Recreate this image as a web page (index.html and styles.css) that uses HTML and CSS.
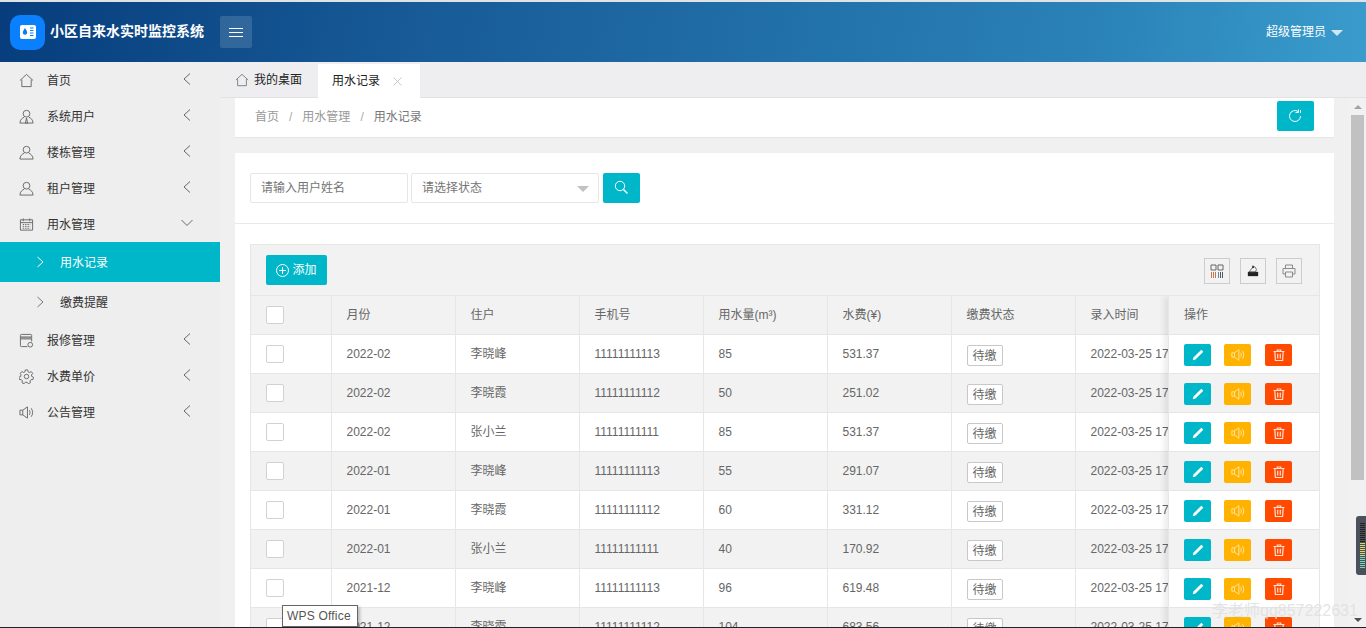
FILE: index.html
```html
<!DOCTYPE html>
<html lang="zh-CN">
<head>
<meta charset="utf-8">
<title>小区自来水实时监控系统</title>
<link rel="stylesheet" href="styles.css">
</head>
<body>
<svg class="defs" width="0" height="0" aria-hidden="true">
  <symbol id="i-home" viewBox="0 0 16 16"><path d="M1 8 8 1.500 15 8M3 7v7.500h10V7" fill="none" stroke="currentColor"/></symbol>
  <symbol id="i-user" viewBox="0 0 16 16"><circle cx="8" cy="5" r="3.600" fill="none" stroke="currentColor"/><path d="M1 15c0-3.500 2.500-5.500 4.500-6.200M15 15c0-3.500-2.500-5.500-4.500-6.200M1 15h14" fill="none" stroke="currentColor"/></symbol>
  <symbol id="i-tie" viewBox="0 0 16 16"><circle cx="8" cy="5" r="3.600" fill="none" stroke="currentColor"/><path d="M1 15c0-3.500 2.500-5.500 4.500-6.200M15 15c0-3.500-2.500-5.500-4.500-6.200M1 15h14M8 9.500 6.800 15h2.400z" fill="none" stroke="currentColor"/></symbol>
  <symbol id="i-cal" viewBox="0 0 16 16"><path d="M1.500 3h13v11h-13zM1.500 6h13M4.500 1.500v3M11.500 1.500v3" fill="none" stroke="currentColor"/><path d="M4 8h8M4 10h8M4 12h8" stroke="currentColor" stroke-dasharray="1.500 1"/></symbol>
  <symbol id="i-form" viewBox="0 0 16 16"><path d="M9 14.500H2.500a1 1 0 0 1-1-1v-11a1 1 0 0 1 1-1h10a1 1 0 0 1 1 1V9" fill="none" stroke="currentColor"/><path d="M2 3.500h11v3.500H2z" fill="currentColor" opacity=".7"/><circle cx="12" cy="12.500" r="2.500" fill="none" stroke="currentColor"/></symbol>
  <symbol id="i-gear" viewBox="0 0 16 16"><path d="M6.700 1h2.600l.4 2 1.500.7 1.800-1 1.600 2-1.300 1.600.3 1.700 1.900.8-.6 2.500-2 0-1.100 1.300.4 2-2.300 1.100-1.300-1.600h-1.800l-1.300 1.600-2.300-1.100.4-2-1.100-1.300-2 0-.6-2.500 1.900-.8.300-1.700L1.400 4.700l1.600-2 1.800 1 1.500-.7z" fill="none" stroke="currentColor"/><circle cx="8" cy="8" r="2.400" fill="none" stroke="currentColor"/></symbol>
  <symbol id="i-sound" viewBox="0 0 16 16"><path d="M1 5.500h3L9 2v12l-5-3.500H1zM4 5.500v5M11 5.500c1 1.500 1 3.500 0 5M13 3.500c2 2.500 2 6.500 0 9" fill="none" stroke="currentColor"/></symbol>
  <symbol id="i-left" viewBox="0 0 10 12"><path d="M8 .5 2 6l6 5.500" fill="none" stroke="currentColor"/></symbol>
  <symbol id="i-down" viewBox="0 0 12 10"><path d="M.5 2 6 7.500 11.500 2" fill="none" stroke="currentColor"/></symbol>
  <symbol id="i-right" viewBox="0 0 10 12"><path d="M2.500 1 8 6l-5.500 5" fill="none" stroke="currentColor"/></symbol>
  <symbol id="i-pen" viewBox="0 0 12 12"><path d="M9.300 .7 11.300 2.700 3.500 10.500 .7 11.300 1.500 8.500z" fill="currentColor"/></symbol>
  <symbol id="i-trash" viewBox="0 0 12 12"><path d="M.5 2.500h11M4.300 2.500V1h3.400v1.500M1.800 2.500l.6 9h7.200l.6-9M4.700 4.800v4.700M7.300 4.800v4.700" fill="none" stroke="currentColor" stroke-width="1.200"/></symbol>
</svg>

<div class="strip"></div>
<header class="topbar">
  <div class="brand">
    <span class="logo"><svg width="16" height="14" viewBox="0 0 16 14"><rect width="16" height="14" rx="2" fill="#fff"/><path d="M5 3c1.500 2.200 2.200 3.300 2.200 4.600a2.200 2.200 0 0 1-4.400 0C2.800 6.300 3.500 5.200 5 3z" fill="#0a7cf0"/><path d="M10 3h3.500M10 5.500h3.500M10 8h3.500M10 10.500h3.500" stroke="#0a7cf0"/></svg></span>
    <span class="brand-name">小区自来水实时监控系统</span>
  </div>
  <button class="menu-btn" aria-label="菜单"><span></span><span></span><span></span></button>
  <div class="account">超级管理员<i class="caret-white"></i></div>
</header>

<div class="layout">
  <aside class="sidebar">
    <div class="nav-item"><svg class="nav-icon"><use href="#i-home"/></svg><span class="nav-label">首页</span><svg class="nav-arrow"><use href="#i-left"/></svg></div>
    <div class="nav-item"><svg class="nav-icon"><use href="#i-tie"/></svg><span class="nav-label">系统用户</span><svg class="nav-arrow"><use href="#i-left"/></svg></div>
    <div class="nav-item"><svg class="nav-icon"><use href="#i-user"/></svg><span class="nav-label">楼栋管理</span><svg class="nav-arrow"><use href="#i-left"/></svg></div>
    <div class="nav-item"><svg class="nav-icon"><use href="#i-user"/></svg><span class="nav-label">租户管理</span><svg class="nav-arrow"><use href="#i-left"/></svg></div>
    <div class="nav-item"><svg class="nav-icon"><use href="#i-cal"/></svg><span class="nav-label">用水管理</span><svg class="nav-arrow nav-arrow-open"><use href="#i-down"/></svg></div>
    <div class="sub-item active"><svg class="sub-arrow"><use href="#i-right"/></svg><span>用水记录</span></div>
    <div class="sub-item"><svg class="sub-arrow"><use href="#i-right"/></svg><span>缴费提醒</span></div>
    <div class="nav-item"><svg class="nav-icon"><use href="#i-form"/></svg><span class="nav-label">报修管理</span><svg class="nav-arrow"><use href="#i-left"/></svg></div>
    <div class="nav-item"><svg class="nav-icon"><use href="#i-gear"/></svg><span class="nav-label">水费单价</span><svg class="nav-arrow"><use href="#i-left"/></svg></div>
    <div class="nav-item"><svg class="nav-icon"><use href="#i-sound"/></svg><span class="nav-label">公告管理</span><svg class="nav-arrow"><use href="#i-left"/></svg></div>
  </aside>

  <main class="main">
    <div class="tabs">
      <div class="tab"><svg class="tab-home"><use href="#i-home"/></svg>我的桌面</div>
      <div class="tab tab-on">用水记录<svg class="tab-close" viewBox="0 0 10 10"><path d="M.5.5l9 9M9.500.5l-9 9" stroke="currentColor" fill="none"/></svg></div>
    </div>
    <div class="view">
      <div class="content">
        <div class="crumbs">
          <span class="crumb">首页</span><span class="sep">/</span><span class="crumb">用水管理</span><span class="sep">/</span><span class="crumb crumb-on">用水记录</span>
          <button class="btn btn-refresh" aria-label="刷新"><svg class="refresh-i" width="14" height="14" viewBox="0 0 14 14"><path d="M12.500 7A5.500 5.500 0 1 1 10 2.400" fill="none" stroke="#fff"/><path d="M10.500 .5v3h-3M12.500 1v3" fill="none" stroke="#fff"/></svg></button>
        </div>
        <section class="card">
          <div class="search">
            <div class="field field-name">请输入用户姓名</div>
            <div class="field field-select">请选择状态<i class="caret-grey"></i></div>
            <button class="btn btn-search" aria-label="搜索"><svg class="search-i" width="14" height="14" viewBox="0 0 14 14"><circle cx="6" cy="6" r="4.700" fill="none" stroke="#fff"/><path d="M9.500 9.500l4 4" stroke="#fff" stroke-width="1.500"/></svg></button>
          </div>
          <div class="table-area">
            <div class="toolbar">
              <button class="btn btn-add"><svg width="13" height="13" viewBox="0 0 13 13"><circle cx="6.500" cy="6.500" r="6" fill="none" stroke="#fff"/><path d="M6.500 3v7M3 6.500h7" stroke="#fff"/></svg>添加</button>
              <div class="tools">
                <span class="tool"><svg width="14" height="14" viewBox="0 0 14 14"><path d="M1 1h5v5H1zM8 1h5v5H8z" fill="none" stroke="#666"/><path d="M1.500 8v6M3.500 8v6M5.500 8v6" stroke="#c8794b"/><path d="M8.500 8v6" stroke="#4a8ec2"/><path d="M10.500 8v6M12.500 8v6" stroke="#555"/></svg></span>
                <span class="tool"><svg width="12" height="12" viewBox="0 0 14 14"><path d="M1 8h12v5H1z" fill="#222"/><path d="M2.500 8 6 3.500 9 2l2 3-1 3z" fill="none" stroke="#555"/><path d="M6 1h2v2.500H6z" fill="#333"/></svg></span>
                <span class="tool"><svg width="14" height="14" viewBox="0 0 14 14"><path d="M3.500 4V1h7v3M3.500 10H1V4.500h12V10h-2.500M3.500 8h7v5h-7z" fill="none" stroke="#8a8a8a"/></svg></span>
              </div>
            </div>
            <div class="grid-wrap">
              <table class="grid">
                <colgroup><col class="c0"><col class="c"><col class="c"><col class="c"><col class="c"><col class="c"><col class="c"><col class="c"></colgroup>
                <thead><tr><th><i class="check"></i></th><th>月份</th><th>住户</th><th>手机号</th><th>用水量(m³)</th><th>水费(¥)</th><th>缴费状态</th><th>录入时间</th></tr></thead>
                <tbody>
                  <tr><td><i class="check"></i></td><td>2022-02</td><td>李晓峰</td><td>11111111113</td><td>85</td><td>531.37</td><td><span class="tag">待缴</span></td><td>2022-03-25 17:20:11</td></tr>
                  <tr><td><i class="check"></i></td><td>2022-02</td><td>李晓霞</td><td>11111111112</td><td>50</td><td>251.02</td><td><span class="tag">待缴</span></td><td>2022-03-25 17:20:11</td></tr>
                  <tr><td><i class="check"></i></td><td>2022-02</td><td>张小兰</td><td>11111111111</td><td>85</td><td>531.37</td><td><span class="tag">待缴</span></td><td>2022-03-25 17:20:11</td></tr>
                  <tr><td><i class="check"></i></td><td>2022-01</td><td>李晓峰</td><td>11111111113</td><td>55</td><td>291.07</td><td><span class="tag">待缴</span></td><td>2022-03-25 17:20:11</td></tr>
                  <tr><td><i class="check"></i></td><td>2022-01</td><td>李晓霞</td><td>11111111112</td><td>60</td><td>331.12</td><td><span class="tag">待缴</span></td><td>2022-03-25 17:20:11</td></tr>
                  <tr><td><i class="check"></i></td><td>2022-01</td><td>张小兰</td><td>11111111111</td><td>40</td><td>170.92</td><td><span class="tag">待缴</span></td><td>2022-03-25 17:20:11</td></tr>
                  <tr><td><i class="check"></i></td><td>2021-12</td><td>李晓峰</td><td>11111111113</td><td>96</td><td>619.48</td><td><span class="tag">待缴</span></td><td>2022-03-25 17:20:11</td></tr>
                  <tr><td><i class="check"></i></td><td>2021-12</td><td>李晓霞</td><td>11111111112</td><td>104</td><td>683.56</td><td><span class="tag">待缴</span></td><td>2022-03-25 17:20:11</td></tr>
                </tbody>
              </table>
              <div class="fixed-col">
                <div class="fixed-head">操作</div>
                <div class="fixed-row"><span class="act a-edit"><svg class="act-i"><use href="#i-pen"/></svg></span><span class="act a-warn"><svg class="act-s"><use href="#i-sound"/></svg></span><span class="act a-del"><svg class="act-i"><use href="#i-trash"/></svg></span></div>
                <div class="fixed-row alt"><span class="act a-edit"><svg class="act-i"><use href="#i-pen"/></svg></span><span class="act a-warn"><svg class="act-s"><use href="#i-sound"/></svg></span><span class="act a-del"><svg class="act-i"><use href="#i-trash"/></svg></span></div>
                <div class="fixed-row"><span class="act a-edit"><svg class="act-i"><use href="#i-pen"/></svg></span><span class="act a-warn"><svg class="act-s"><use href="#i-sound"/></svg></span><span class="act a-del"><svg class="act-i"><use href="#i-trash"/></svg></span></div>
                <div class="fixed-row alt"><span class="act a-edit"><svg class="act-i"><use href="#i-pen"/></svg></span><span class="act a-warn"><svg class="act-s"><use href="#i-sound"/></svg></span><span class="act a-del"><svg class="act-i"><use href="#i-trash"/></svg></span></div>
                <div class="fixed-row"><span class="act a-edit"><svg class="act-i"><use href="#i-pen"/></svg></span><span class="act a-warn"><svg class="act-s"><use href="#i-sound"/></svg></span><span class="act a-del"><svg class="act-i"><use href="#i-trash"/></svg></span></div>
                <div class="fixed-row alt"><span class="act a-edit"><svg class="act-i"><use href="#i-pen"/></svg></span><span class="act a-warn"><svg class="act-s"><use href="#i-sound"/></svg></span><span class="act a-del"><svg class="act-i"><use href="#i-trash"/></svg></span></div>
                <div class="fixed-row"><span class="act a-edit"><svg class="act-i"><use href="#i-pen"/></svg></span><span class="act a-warn"><svg class="act-s"><use href="#i-sound"/></svg></span><span class="act a-del"><svg class="act-i"><use href="#i-trash"/></svg></span></div>
                <div class="fixed-row alt"><span class="act a-edit"><svg class="act-i"><use href="#i-pen"/></svg></span><span class="act a-warn"><svg class="act-s"><use href="#i-sound"/></svg></span><span class="act a-del"><svg class="act-i"><use href="#i-trash"/></svg></span></div>
              </div>
            </div>
          </div>
        </section>
      </div>
      <div class="scrollbar">
        <i class="sb-up"></i>
        <div class="sb-thumb"></div>
        <i class="sb-down"></i>
      </div>
    </div>
  </main>
</div>

<div class="tooltip">WPS Office</div>
<div class="watermark">李老师qq857222631</div>
<div class="widget"><span class="bars"></span></div>
<div class="edge"></div>
</body>
</html>
```

FILE: styles.css
```css
* { box-sizing: border-box; }
html, body { margin: 0; height: 628px; overflow: hidden; }
body {
  position: relative;
  display: flex;
  flex-direction: column;
  font: 12px/1.4 "Liberation Sans", "Noto Sans CJK SC", sans-serif;
  color: #666;
  background: #eeeef0;
}
.defs { position: absolute; }
i { display: block; font-style: normal; }
button { border: 0; padding: 0; font: inherit; color: inherit; }

.strip { height: 2px; background: #dfe3e6; flex: none; }
.topbar {
  height: 60px;
  flex: none;
  display: flex;
  align-items: center;
  background: linear-gradient(100deg, #073d7c 0%, #175a97 30%, #2a82b8 80%, #3a9ccc 100%);
  color: #fff;
}
.brand { display: flex; align-items: center; width: 220px; padding-left: 10px; }
.logo {
  width: 35px; height: 35px; border-radius: 10px; background: #0a80ff;
  display: flex; align-items: center; justify-content: center; margin-right: 5px;
}
.brand-name { font-size: 14px; font-weight: 700; white-space: nowrap; }
.menu-btn {
  width: 32px; height: 32px; border-radius: 2px; background: rgba(255,255,255,.14);
  display: flex; flex-direction: column; justify-content: center; align-items: center; gap: 3px;
}
.menu-btn span { width: 14px; height: 1px; background: #fff; }
.account { margin-left: auto; margin-right: 23px; display: flex; align-items: center; white-space: nowrap; }
.caret-white { margin: 2px 0 0 5px; border: 6px solid transparent; border-top: 6px solid #cfe6f3; border-bottom: 0; }

.layout { flex: 1; display: flex; min-height: 0; }
.sidebar { width: 220px; flex: none; background: #eee; color: #333; }
.nav-item { height: 36px; display: flex; align-items: center; padding: 2px 0 0 19px; }
.nav-icon { width: 15px; height: 15px; color: #666; flex: none; position: relative; top: -1px; }
.nav-label { margin-left: 13px; }
.nav-arrow { width: 10px; height: 12px; color: #666; margin-left: auto; margin-right: 28px; position: relative; top: -2px; }
.nav-arrow-open { width: 12px; height: 10px; margin-right: 27px; }
.sub-item { height: 40px; display: flex; align-items: center; padding: 2px 0 0 35px; gap: 15px; }
.sub-arrow { width: 10px; height: 12px; color: #777; flex: none; position: relative; top: -1px; }
.sub-item.active { background: #00b7c9; color: #fff; }
.sub-item.active .sub-arrow { color: #fff; }

.main { flex: 1; min-width: 0; display: flex; flex-direction: column; }
.tabs {
  height: 36px; flex: none; display: flex; align-items: flex-end;
  padding-left: 15px; border-bottom: 1px solid #e2e2e4; background: #eeeef0;
}
.tab { height: 34px; display: flex; align-items: center; color: #222; width: 83px; }
.tab-home { width: 14px; height: 14px; color: #777; margin-right: 5px; }
.tab-on { width: 102px; background: #fff; padding-left: 14px; height: 34px; margin-bottom: -1px; }
.tab-close { width: 9px; height: 9px; color: #c4c4c4; margin-left: 13px; }

.view { flex: 1; min-height: 0; display: flex; }
.content { flex: 1; min-width: 0; padding: 0 15px; background: #f0f0f0; overflow: hidden; }
.crumbs {
  height: 40px; background: #fff; border-bottom: 1px solid #e6e6e6;
  display: flex; align-items: center; padding-left: 20px; color: #999;
}
.sep { margin: 0 10px; color: #aaa; }
.crumb-on { color: #777; }
.btn { background: #00b7c9; color: #fff; border-radius: 2px; display: flex; align-items: center; justify-content: center; }
.btn-refresh { width: 37px; height: 30px; margin-left: auto; margin-right: 20px; margin-top: -3px; }
.refresh-i { margin: -1px 2px 0 0; }

.card { margin-top: 15px; background: #fff; }
.search { height: 71px; padding: 20px 15px 0; display: flex; gap: 3px; border-bottom: 1px solid #e9e9e9; }
.field {
  height: 30px; border: 1px solid #e6e6e6; border-radius: 2px; background: #fff; color: #757575;
  display: flex; align-items: center; padding-left: 10px;
}
.field-name { width: 158px; }
.field-select { width: 188px; position: relative; }
.caret-grey { position: absolute; right: 9px; top: 12px; border: 6px solid transparent; border-top: 6px solid #c2c2c2; border-bottom: 0; }
.btn-search { width: 37px; height: 30px; margin-left: 1px; }
.search-i { margin: -2px 2px 0 0; }

.table-area { padding: 20px 14px 0 15px; }
.toolbar {
  height: 52px; background: #f2f2f2; border: 1px solid #e6e6e6;
  display: flex; align-items: center; justify-content: space-between; padding: 0 17px 0 15px;
}
.btn-add { width: 61px; height: 30px; gap: 3px; }
.tools { display: flex; gap: 10px; margin-top: 2px; }
.tool { width: 26px; height: 26px; border: 1px solid #ccc; display: flex; align-items: center; justify-content: center; }

.grid-wrap { position: relative; overflow: hidden; border-left: 1px solid #e6e6e6; border-right: 1px solid #e6e6e6; }
.grid { table-layout: fixed; width: 948px; border-collapse: collapse; margin-top: -1px; }
.c0 { width: 80px; }
.c { width: 124px; }
.grid th, .grid td {
  height: 39px; padding: 0 15px; text-align: left; font-weight: 400; color: #666;
  border: 1px solid #e6e6e6; border-left: 0; white-space: nowrap; overflow: hidden;
}
.grid th { background: #f2f2f2; }
.grid tbody tr:nth-child(even) td { background: #f2f2f2; }
.check { width: 18px; height: 18px; background: #fff; border: 1px solid #d2d2d2; border-radius: 2px; }
.tag { display: inline-block; padding: 0 5px; height: 21px; line-height: 20px; border: 1px solid #c8c8c8; border-radius: 2px; background: #fff; position: relative; top: 1px; }

.fixed-col {
  position: absolute; top: 0; right: 0; width: 151px; background: #fff;
  box-shadow: -4px 0 6px rgba(0,0,0,.08); border-left: 1px solid #e6e6e6;
}
.fixed-head { height: 39px; background: #f2f2f2; padding-left: 15px; display: flex; align-items: center; border-bottom: 1px solid #e6e6e6; }
.fixed-row { height: 39px; display: flex; align-items: center; padding: 2px 0 0 15px; gap: 13px; border-bottom: 1px solid #e6e6e6; background: #fff; }
.fixed-row.alt { background: #f2f2f2; }
.act { width: 27px; height: 22px; border-radius: 2px; display: flex; align-items: center; justify-content: center; color: #fff; }
.act-i { width: 12px; height: 12px; }
.act-s { width: 14px; height: 14px; }
.a-edit { background: #00b7c9; }
.a-warn { background: #ffb300; color: #ffeab0; }
.a-del { background: #ff4a00; color: #ffe0d5; margin-left: 1px; }

.scrollbar { width: 17px; flex: none; background: #f1f1f1; position: relative; }
.sb-up { position: absolute; left: 5px; top: 7px; border: 4px solid transparent; border-bottom: 4px solid #a3a3a3; border-top: 0; }
.sb-down { position: absolute; left: 5px; bottom: 6px; border: 4px solid transparent; border-top: 4px solid #505050; border-bottom: 0; }
.sb-thumb { position: absolute; left: 2px; top: 17px; width: 13px; height: 365px; background: #c1c1c1; }

.tooltip {
  position: absolute; left: 282px; top: 605px; width: 76px; height: 22px;
  background: #fff; border: 1px solid #666; color: #555; font-size: 12px; line-height: 20px;
  padding-left: 4px; letter-spacing: .2px; box-shadow: 2px 2px 3px rgba(0,0,0,.25); white-space: nowrap;
}
.watermark { position: absolute; left: 1212px; top: 600px; font-size: 16px; color: rgba(222,222,222,.8); white-space: nowrap; }
.widget {
  position: absolute; left: 1356px; top: 516px; width: 10px; height: 59px;
  background: #4a515c; border-radius: 3px 0 0 3px; padding: 7px 0 0 4px;
}
.bars {
  display: block; width: 5px; height: 45px;
  background: repeating-linear-gradient(to bottom, transparent 0 1px, #4a515c 1px 2px),
    linear-gradient(to bottom, #222 0 45%, #d8d86a 45% 75%, #72d8b8 75% 100%);
}
.edge { position: absolute; left: 0; right: 0; bottom: 0; height: 1px; background: #222; }
```
